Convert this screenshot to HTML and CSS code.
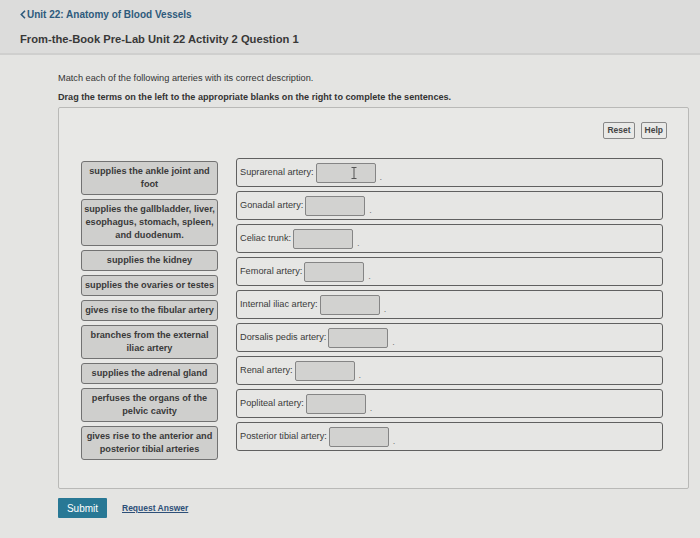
FILE: index.html
```html
<!DOCTYPE html>
<html>
<head>
<meta charset="utf-8">
<link rel="stylesheet" href="styles.css">
</head>
<body>
<header class="top">
  <a class="back" href="#"><svg class="chev" width="6" height="9" viewBox="0 0 6 9"><path d="M5 0.8L1.3 4.5L5 8.2" stroke="#2d5a7c" stroke-width="1.6" fill="none"/></svg>Unit 22: Anatomy of Blood Vessels</a>
  <h1 class="title">From-the-Book Pre-Lab Unit 22 Activity 2 Question 1</h1>
</header>
<main class="content">
  <p class="intro">Match each of the following arteries with its correct description.</p>
  <p class="instr">Drag the terms on the left to the appropriate blanks on the right to complete the sentences.</p>
  <section class="panel">
    <div class="tools">
      <button class="tool">Reset</button>
      <button class="tool">Help</button>
    </div>
    <div class="cols">
      <div class="terms">
        <div class="term">supplies the ankle joint and foot</div>
        <div class="term">supplies the gallbladder, liver, esophagus, stomach, spleen, and duodenum.</div>
        <div class="term">supplies the kidney</div>
        <div class="term">supplies the ovaries or testes</div>
        <div class="term">gives rise to the fibular artery</div>
        <div class="term">branches from the external iliac artery</div>
        <div class="term">supplies the adrenal gland</div>
        <div class="term">perfuses the organs of the pelvic cavity</div>
        <div class="term">gives rise to the anterior and posterior tibial arteries</div>
      </div>
      <div class="rows">
        <div class="row"><span class="lbl">Suprarenal artery:</span><span class="blank"><svg class="cursor" width="8" height="12" viewBox="0 0 8 12"><path d="M1.5 0.5h5M1.5 11.5h5M4 0.5v11" stroke="#555" stroke-width="1" fill="none"/></svg></span><span class="dot">.</span></div>
        <div class="row"><span class="lbl">Gonadal artery:</span><span class="blank"></span><span class="dot">.</span></div>
        <div class="row"><span class="lbl">Celiac trunk:</span><span class="blank"></span><span class="dot">.</span></div>
        <div class="row"><span class="lbl">Femoral artery:</span><span class="blank"></span><span class="dot">.</span></div>
        <div class="row"><span class="lbl">Internal iliac artery:</span><span class="blank"></span><span class="dot">.</span></div>
        <div class="row"><span class="lbl">Dorsalis pedis artery:</span><span class="blank"></span><span class="dot">.</span></div>
        <div class="row"><span class="lbl">Renal artery:</span><span class="blank"></span><span class="dot">.</span></div>
        <div class="row"><span class="lbl">Popliteal artery:</span><span class="blank"></span><span class="dot">.</span></div>
        <div class="row"><span class="lbl">Posterior tibial artery:</span><span class="blank"></span><span class="dot">.</span></div>
      </div>
    </div>
  </section>
  <div class="actions">
    <button class="submit">Submit</button>
    <a class="request" href="#">Request Answer</a>
  </div>
</main>
</body>
</html>
```
FILE: styles.css
```css
* { box-sizing: border-box; }
html, body { margin: 0; padding: 0; }
body {
  width: 700px;
  height: 538px;
  overflow: hidden;
  background: #e4e4e2;
  font-family: "Liberation Sans", Arial, sans-serif;
  color: #333;
}
.top {
  height: 55px;
  background: #dcdcdb;
  border-bottom: 2px solid #cfcfce;
  padding: 8px 0 0 20px;
}
.back {
  display: flex;
  align-items: center;
  gap: 1px;
  font-size: 10px;
  font-weight: bold;
  color: #2d5a7c;
  text-decoration: none;
  line-height: 13px;
}
.title {
  margin: 11px 0 0 0;
  font-size: 11.2px;
  font-weight: bold;
  line-height: 14px;
  color: #383838;
}
.content {
  padding: 18px 0 0 58px;
}
.intro {
  margin: 0;
  font-size: 9.2px;
  line-height: 11px;
}
.instr {
  margin: 8px 0 0 0;
  font-size: 9.1px;
  font-weight: bold;
  line-height: 11px;
}
.panel {
  margin-top: 4px;
  width: 631px;
  height: 382px;
  border: 1px solid #b9b9b7;
  border-radius: 2px;
  background: #e8e8e6;
  padding: 14px 25px 0 22px;
}
.tools {
  display: flex;
  justify-content: flex-end;
  gap: 6px;
  margin-right: -4px;
}
.tool {
  font-family: "Liberation Sans", Arial, sans-serif;
  font-size: 8.5px;
  font-weight: bold;
  color: #444;
  background: #e9e9e7;
  border: 1px solid #888;
  border-radius: 2px;
  padding: 2px 3px;
  line-height: 11px;
}
.cols {
  display: flex;
  gap: 18px;
  margin-top: 19px;
}
.terms {
  width: 137px;
  display: flex;
  flex-direction: column;
  gap: 4px;
  margin-top: 3px;
}
.term {
  background: #cfcfcd;
  border: 1px solid #727272;
  border-radius: 3px;
  padding: 3px 1px;
  text-align: center;
  font-size: 9.2px;
  font-weight: bold;
  line-height: 13px;
  color: #3a3a3a;
}
.rows {
  flex: 1;
  display: flex;
  flex-direction: column;
  gap: 4px;
}
.row {
  height: 29px;
  border: 1.5px solid #606060;
  border-radius: 3px;
  background: #e6e6e4;
  display: flex;
  align-items: flex-start;
  padding: 4px 0 0 3px;
  font-size: 9.2px;
  color: #3a3a3a;
}
.lbl {
  line-height: 12px;
  margin-top: 3px;
}
.blank {
  width: 60px;
  height: 20px;
  margin-left: 2px;
  background: #d2d2d0;
  border: 1px solid #858585;
  border-radius: 2px;
  display: flex;
  align-items: center;
  justify-content: center;
}
.cursor { margin-left: 16px; }
.dot {
  margin-left: 4px;
  margin-top: 9px;
  line-height: 10px;
  color: #777;
}
.actions {
  display: flex;
  align-items: center;
  gap: 15px;
  margin-top: 9px;
}
.submit {
  font-family: "Liberation Sans", Arial, sans-serif;
  width: 49px;
  height: 20px;
  background: #287895;
  color: #fff;
  border: none;
  border-radius: 1px;
  font-size: 10px;
  padding: 0;
}
.request {
  font-size: 8.5px;
  font-weight: bold;
  color: #2d4f78;
  text-decoration: underline;
}
```
